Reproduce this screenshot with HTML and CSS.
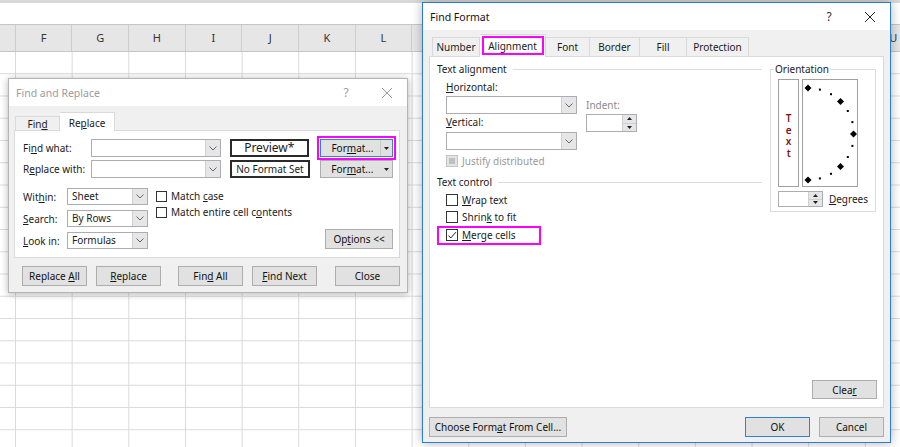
FILE: index.html
```html
<!DOCTYPE html>
<html lang="en">
  <head>
    <meta charset="UTF-8" />
    <meta name="viewport" content="width=device-width, initial-scale=1.0" />
    <title>Find Format</title>
    <link rel="stylesheet" href="styles.css">
  </head>
  <body>
    <!-- worksheet behind the dialogs (M..T sit under the Find Format window) -->
    <div class="sheet">
      <div class="sheet-top"></div>
      <div class="col-heads">
        <div class="col-head"></div>
        <div class="col-head">F</div>
        <div class="col-head">G</div>
        <div class="col-head">H</div>
        <div class="col-head">I</div>
        <div class="col-head">J</div>
        <div class="col-head">K</div>
        <div class="col-head">L</div>
        <div class="col-head"></div>
        <div class="col-head"></div>
        <div class="col-head"></div>
        <div class="col-head"></div>
        <div class="col-head"></div>
        <div class="col-head"></div>
        <div class="col-head"></div>
        <div class="col-head"></div>
        <div class="col-head">U</div>
      </div>
      <div class="cells"></div>
    </div>

    <!-- Find and Replace (inactive window) -->
    <div class="dialog find-replace">
      <div class="title-bar">
        <span class="title">Find and Replace</span>
        <span class="help">?</span>
        <svg class="close" width="10" height="10" viewBox="0 0 10 10"><path d="M0 0L10 10M10 0L0 10" stroke="#9a9a9a" stroke-width="1"/></svg>
      </div>
      <div class="dialog-body">
        <div class="tabs fr-tabs">
          <div class="tab tab-find"><span>Fin<u>d</u></span></div>
          <div class="tab tab-replace active"><span>Re<u>p</u>lace</span></div>
        </div>
        <div class="panel fr-panel">
          <div class="fr-row">
            <span class="fr-label">Fi<u>n</u>d what:</span>
            <div class="combo fr-input">
              <span class="field"></span>
              <span class="drop"><svg width="8" height="5" viewBox="0 0 8 5"><path d="M0.5 0.5L4 4L7.5 0.5" fill="none" stroke="#666"/></svg></span>
            </div>
            <div class="preview preview-big">Preview*</div>
            <button class="btn split default marked">
              <span class="split-text">For<u>m</u>at...</span>
              <span class="split-arrow"><svg width="5" height="3" viewBox="0 0 5 3"><path d="M0 0H5L2.5 3Z" fill="#222"/></svg></span>
            </button>
          </div>
          <div class="fr-row fr-row-2">
            <span class="fr-label">R<u>e</u>place with:</span>
            <div class="combo fr-input">
              <span class="field"></span>
              <span class="drop"><svg width="8" height="5" viewBox="0 0 8 5"><path d="M0.5 0.5L4 4L7.5 0.5" fill="none" stroke="#666"/></svg></span>
            </div>
            <div class="preview">No Format Set</div>
            <button class="btn split">
              <span class="split-text">For<u>m</u>at...</span>
              <span class="split-arrow plain"><svg width="5" height="3" viewBox="0 0 5 3"><path d="M0 0H5L2.5 3Z" fill="#222"/></svg></span>
            </button>
          </div>
          <div class="fr-options">
            <div class="fr-selects">
              <div class="select-row">
                <span class="select-label">Wit<u>h</u>in:</span>
                <div class="combo small-combo">
                  <span class="field">Sheet</span>
                  <span class="drop"><svg width="8" height="5" viewBox="0 0 8 5"><path d="M0.5 0.5L4 4L7.5 0.5" fill="none" stroke="#666"/></svg></span>
                </div>
              </div>
              <div class="select-row">
                <span class="select-label"><u>S</u>earch:</span>
                <div class="combo small-combo">
                  <span class="field">By Rows</span>
                  <span class="drop"><svg width="8" height="5" viewBox="0 0 8 5"><path d="M0.5 0.5L4 4L7.5 0.5" fill="none" stroke="#666"/></svg></span>
                </div>
              </div>
              <div class="select-row">
                <span class="select-label"><u>L</u>ook in:</span>
                <div class="combo small-combo">
                  <span class="field">Formulas</span>
                  <span class="drop"><svg width="8" height="5" viewBox="0 0 8 5"><path d="M0.5 0.5L4 4L7.5 0.5" fill="none" stroke="#666"/></svg></span>
                </div>
              </div>
            </div>
            <div class="fr-checks">
              <div class="check"><span class="box"></span><span>Match <u>c</u>ase</span></div>
              <div class="check"><span class="box"></span><span>Match entire cell c<u>o</u>ntents</span></div>
            </div>
            <button class="btn options-btn"><span>Op<u>t</u>ions &lt;&lt;</span></button>
          </div>
        </div>
        <div class="fr-buttons">
          <button class="btn"><span>Replace <u>A</u>ll</span></button>
          <button class="btn"><span><u>R</u>eplace</span></button>
          <button class="btn btn-find-all"><span>Fin<u>d</u> All</span></button>
          <button class="btn"><span><u>F</u>ind Next</span></button>
          <button class="btn btn-close">Close</button>
        </div>
      </div>
    </div>

    <!-- Find Format (active window) -->
    <div class="dialog find-format">
      <div class="title-bar">
        <span class="title">Find Format</span>
        <span class="help">?</span>
        <svg class="close" width="10" height="10" viewBox="0 0 10 10"><path d="M0 0L10 10M10 0L0 10" stroke="#222" stroke-width="1"/></svg>
      </div>
      <div class="dialog-body">
        <div class="tabs ff-tabs">
          <div class="tab tab-number">Number</div>
          <div class="tab tab-alignment active marked">Alignment</div>
          <div class="tab tab-font">Font</div>
          <div class="tab tab-border">Border</div>
          <div class="tab tab-fill">Fill</div>
          <div class="tab tab-protection">Protection</div>
        </div>
        <div class="panel ff-panel">
          <div class="ff-top">
            <div class="ff-left">
              <div class="group-title">Text alignment</div>
              <div class="align-grid">
                <div class="align-col">
                  <div class="field-label"><u>H</u>orizontal:</div>
                  <div class="combo wide-combo">
                    <span class="field"></span>
                    <span class="drop"><svg width="8" height="5" viewBox="0 0 8 5"><path d="M0.5 0.5L4 4L7.5 0.5" fill="none" stroke="#666"/></svg></span>
                  </div>
                  <div class="field-label"><u>V</u>ertical:</div>
                  <div class="combo wide-combo vertical-combo">
                    <span class="field"></span>
                    <span class="drop"><svg width="8" height="5" viewBox="0 0 8 5"><path d="M0.5 0.5L4 4L7.5 0.5" fill="none" stroke="#666"/></svg></span>
                  </div>
                </div>
                <div class="indent-col">
                  <div class="field-label muted">Indent:</div>
                  <div class="spin indent-spin">
                    <span class="field"></span>
                    <span class="arrows">
                      <span><svg width="5" height="3" viewBox="0 0 5 3"><path d="M0 3H5L2.5 0Z" fill="#222"/></svg></span>
                      <span><svg width="5" height="3" viewBox="0 0 5 3"><path d="M0 0H5L2.5 3Z" fill="#222"/></svg></span>
                    </span>
                  </div>
                </div>
              </div>
              <div class="check disabled justify"><span class="box"></span><span>Justify distributed</span></div>
              <div class="group-title control-title">Text control</div>
              <div class="check control-check"><span class="box"></span><span><u>W</u>rap text</span></div>
              <div class="check control-check"><span class="box"></span><span>Shrin<u>k</u> to fit</span></div>
              <div class="check control-check merge">
                <span class="box"><svg width="11" height="11" viewBox="0 0 11 11"><path d="M1.5 5.5L4.2 8.2L9.8 1.8" fill="none" stroke="#222" stroke-width="1.1"/></svg></span>
                <span><u>M</u>erge cells</span>
              </div>
            </div>
            <fieldset class="orientation">
              <legend>Orientation</legend>
              <div class="orient-boxes">
                <div class="vert-text"><span>Text</span></div>
                <div class="dial">
                  <svg width="54" height="106" viewBox="0 0 54 106">
                    <g fill="#000">
                      <path d="M5 4.5L8.5 8L5 11.5L1.5 8Z"/>
                      <rect x="15.9" y="8.6" width="2" height="2"/>
                      <rect x="27" y="13.2" width="2" height="2"/>
                      <path d="M37.5 18L41 21.5L37.5 25L34 21.5Z"/>
                      <rect x="43.8" y="30" width="2" height="2"/>
                      <rect x="48.4" y="41.1" width="2" height="2"/>
                      <path d="M50.5 50.5L54 54L50.5 57.5L47 54Z"/>
                      <rect x="48.4" y="64.9" width="2" height="2"/>
                      <rect x="43.8" y="76" width="2" height="2"/>
                      <path d="M37.5 83L41 86.5L37.5 90L34 86.5Z"/>
                      <rect x="27" y="92.8" width="2" height="2"/>
                      <rect x="15.9" y="97.4" width="2" height="2"/>
                      <path d="M5 96.5L8.5 100L5 103.5L1.5 100Z"/>
                    </g>
                  </svg>
                </div>
              </div>
              <div class="degrees">
                <div class="spin degrees-spin">
                  <span class="field"></span>
                  <span class="arrows">
                    <span><svg width="5" height="3" viewBox="0 0 5 3"><path d="M0 3H5L2.5 0Z" fill="#222"/></svg></span>
                    <span><svg width="5" height="3" viewBox="0 0 5 3"><path d="M0 0H5L2.5 3Z" fill="#222"/></svg></span>
                  </span>
                </div>
                <span class="degrees-label"><u>D</u>egrees</span>
              </div>
            </fieldset>
          </div>
          <button class="btn clear-btn"><span>Clea<u>r</u></span></button>
        </div>
        <div class="ff-buttons">
          <button class="btn choose-btn"><span>Choose Form<u>a</u>t From Cell...</span></button>
          <button class="btn default ok-btn">OK</button>
          <button class="btn">Cancel</button>
        </div>
      </div>
    </div>
  </body>
</html>
```

FILE: styles.css
```css
* {
  box-sizing: border-box;
}
body {
  margin: 0;
  width: 900px;
  height: 447px;
  overflow: hidden;
  position: relative;
  background: #fff;
  font-family: "Noto Sans", "Open Sans", sans-serif;
  font-size: 10px;
  color: #1b1b1b;
}
u {
  text-underline-offset: 1px;
}

/* worksheet */
.sheet-top {
  height: 25px;
  border-top: 3px solid #d8d8d8;
  border-bottom: 1px solid #c6c6c6;
}
.col-heads {
  display: grid;
  grid-template-columns: 15.7px repeat(16, 56.67px);
  height: 27px;
  background: #e6e6e6;
  border-bottom: 1px solid #c6c6c6;
  overflow: hidden;
}
.col-head {
  border-right: 1px solid #cdcdcd;
  text-align: center;
  line-height: 26px;
  font-size: 11px;
  color: #333;
}
.cells {
  height: 395px;
  background-image:
    linear-gradient(to right, #dadada 1px, transparent 1px),
    linear-gradient(to bottom, #dadada 1px, transparent 1px);
  background-size: 56.67px 22.25px, 56.67px 22.25px;
  background-position: 15px 0, 0 21.25px;
}

/* dialog frame */
.dialog {
  position: absolute;
  display: flex;
  flex-direction: column;
  background: #f0f0f0;
}
.find-replace {
  left: 8px;
  top: 78px;
  width: 400px;
  height: 215px;
  border: 1px solid #b4b4b4;
  box-shadow: 0 1px 7px rgba(0, 0, 0, 0.3);
}
.find-format {
  left: 422px;
  top: 2px;
  width: 469px;
  height: 441px;
  border: 1px solid #2b7dd4;
  box-shadow: 0 0 10px rgba(0, 0, 0, 0.3);
}
.title-bar {
  display: flex;
  align-items: center;
  height: 27px;
  flex-shrink: 0;
  background: #fff;
  padding: 0 15px 0 7px;
}
.title {
  flex: 1;
  font-size: 10.5px;
  color: #111;
}
.help {
  width: 16px;
  text-align: center;
  font-size: 12px;
  color: #333;
  margin-right: 28px;
}
.find-replace .title,
.find-replace .help {
  color: #9c9c9c;
}
.dialog-body {
  flex: 1;
  display: flex;
  flex-direction: column;
}
.find-replace .dialog-body {
  padding: 0 7px 0 5px;
}
.find-format .dialog-body {
  padding: 0 6px;
}

/* tabs */
.tabs {
  display: flex;
  align-items: flex-end;
  position: relative;
  z-index: 1;
}
.tab {
  display: flex;
  align-items: center;
  justify-content: center;
  border: 1px solid #d9d9d9;
  border-bottom: none;
  background: #f0f0f0;
  white-space: nowrap;
}
.tab + .tab {
  border-left: none;
}
.tab.active {
  background: #fff;
  margin-bottom: -1px;
}
.tab.marked {
  outline: 2px solid #ff00ff;
  outline-offset: -4px;
}
.fr-tabs {
  height: 24px;
  margin-left: 1px;
}
.fr-tabs .tab {
  height: 14px;
  padding-top: 1px;
}
.fr-tabs .tab.active {
  height: 19px;
}
.tab-find {
  width: 45px;
}
.tab-replace {
  width: 55px;
}
.ff-tabs {
  height: 26px;
  margin-left: 3px;
}
.ff-tabs .tab {
  height: 19px;
}
.ff-tabs .tab.active {
  height: 23px;
}
.tab-number {
  width: 48px;
}
.tab-alignment {
  width: 66px;
}
.tab-font {
  width: 44px;
}
.tab-border {
  width: 50px;
}
.tab-fill {
  width: 47px;
}
.tab-protection {
  width: 62px;
}

.panel {
  background: #fff;
  border: 1px solid #d9d9d9;
}

/* buttons and fields */
.btn {
  display: flex;
  align-items: center;
  justify-content: center;
  padding: 0;
  height: 20px;
  font: inherit;
  color: #111;
  background: #e1e1e1;
  border: 1px solid #adadad;
  white-space: nowrap;
}
.btn.default {
  border-color: #2c83d9;
}
.btn.marked {
  outline: 2px solid #ff00ff;
  outline-offset: 1px;
}
.combo,
.spin {
  display: flex;
  background: #fff;
  border: 1px solid #abadb3;
}
.combo .field,
.spin .field {
  flex: 1;
  padding-left: 3px;
  line-height: 15px;
}
.drop {
  width: 15px;
  display: flex;
  align-items: center;
  justify-content: center;
  background: #e6e6e6;
  border-left: 1px solid #cfcfcf;
}
.arrows {
  width: 14px;
  display: flex;
  flex-direction: column;
  border-left: 1px solid #cfcfcf;
}
.arrows span {
  flex: 1;
  display: flex;
  align-items: center;
  justify-content: center;
  background: #e6e6e6;
}
.arrows span + span {
  border-top: 1px solid #cfcfcf;
}
.check {
  display: flex;
  align-items: center;
  line-height: 14px;
  white-space: nowrap;
}
.check .box {
  width: 12px;
  height: 12px;
  margin-right: 4px;
  border: 1px solid #333;
  background: #fff;
  display: flex;
  align-items: center;
  justify-content: center;
}

/* Find and Replace panel */
.fr-panel {
  height: 128px;
  padding: 8px 6px 0 8px;
}
.fr-row {
  display: flex;
  align-items: center;
  height: 18px;
}
.fr-row-2 {
  margin-top: 3px;
}
.fr-label {
  width: 69px;
}
.fr-input {
  width: 131px;
  height: 18px;
}
.preview {
  width: 80px;
  height: 18px;
  margin-left: 9px;
  border: 2px solid #2a2a2a;
  text-align: center;
  line-height: 14px;
}
.preview-big {
  font-size: 12px;
}
.split {
  width: 74px;
  height: 18px;
  margin-left: 11px;
}
.fr-row-2 .split {
  margin-left: 10px;
}
.split-text {
  flex: 1;
  text-align: center;
  padding-left: 4px;
}
.split-arrow {
  width: 12px;
  height: 100%;
  display: flex;
  align-items: center;
  justify-content: center;
  border-left: 1px solid #c8c8c8;
}
.split-arrow.plain {
  border-left-color: transparent;
}
.fr-options {
  display: flex;
  margin-top: 10px;
}
.fr-selects {
  width: 125px;
}
.select-row {
  display: flex;
  align-items: center;
}
.select-row + .select-row {
  margin-top: 5px;
}
.select-label {
  width: 44px;
}
.small-combo {
  width: 81px;
  height: 17px;
}
.small-combo .field {
  padding-left: 4px;
}
.fr-checks {
  flex: 1;
  margin-left: 8px;
}
.fr-checks .check {
  line-height: 16px;
}
.fr-checks .box {
  width: 11px;
  height: 11px;
  margin-right: 4px;
}
.options-btn {
  align-self: flex-end;
  width: 68px;
}
.fr-buttons {
  display: flex;
  gap: 9px;
  margin: 8px 0 0 8px;
}
.fr-buttons .btn {
  width: 66px;
}
.fr-buttons .btn-find-all {
  margin-left: 8px;
}
.fr-buttons .btn-close {
  margin-left: 9px;
}

/* Find Format panel */
.ff-panel {
  height: 352px;
  padding: 5px 6px 8px 7px;
  display: flex;
  flex-direction: column;
}
.ff-top {
  display: flex;
  align-items: flex-start;
}
.ff-left {
  width: 325px;
}
.group-title {
  display: flex;
  align-items: center;
  line-height: 14px;
}
.group-title::after {
  content: "";
  flex: 1;
  margin-left: 6px;
  border-top: 1px solid #dcdcdc;
}
.align-grid {
  display: flex;
  margin-top: 4px;
  padding-left: 9px;
}
.align-col {
  width: 131px;
}
.field-label {
  line-height: 15px;
}
.field-label.muted {
  color: #8a8a8a;
}
.wide-combo {
  height: 18px;
  margin-top: 1px;
  margin-bottom: 1px;
}
.vertical-combo {
  margin-top: 2px;
}
.indent-col {
  margin-left: 9px;
  padding-top: 18px;
}
.indent-spin {
  width: 51px;
  height: 18px;
  margin-top: 1px;
}
.ff-left .check {
  margin-left: 9px;
}
.justify {
  margin-top: 3px;
  color: #9a9a9a;
}
.check.disabled .box {
  border-color: #c4c4c4;
  background: #bfbfbf;
  box-shadow: inset 0 0 0 2px #e4e4e4;
}
.control-title {
  margin-top: 7px;
}
.control-check {
  margin-top: 3px;
}
.control-title + .control-check {
  margin-top: 4px;
}
.ff-left .check.merge {
  width: 104px;
  margin: 2px 0 0 0;
  padding: 0 0 1px 7px;
  border: 2px solid #ff00ff;
}

.orientation {
  width: 106px;
  margin: 0 0 0 8px;
  padding: 3px 7px 4px 7px;
  border: 1px solid #dcdcdc;
  min-width: 0;
}
.orientation legend {
  margin-left: -4px;
  padding: 0 1px;
  line-height: 14px;
}
.orient-boxes {
  display: flex;
  gap: 3px;
}
.vert-text {
  width: 21px;
  height: 108px;
  border: 1px solid #a0a0a0;
  display: flex;
  justify-content: center;
  padding-top: 31px;
  color: #7a1414;
  font-weight: 600;
}
.vert-text span {
  writing-mode: vertical-rl;
  text-orientation: upright;
  letter-spacing: -2.4px;
  line-height: 12px;
}
.dial {
  width: 56px;
  height: 108px;
  border: 1px solid #a0a0a0;
}
.dial svg {
  display: block;
}
.degrees {
  display: flex;
  align-items: center;
  margin-top: 4px;
}
.degrees-spin {
  width: 49px;
  height: 16px;
}
.degrees-label {
  margin-left: 6px;
}
.clear-btn {
  margin-top: auto;
  align-self: flex-end;
  width: 65px;
  height: 19px;
}
.ff-buttons {
  display: flex;
  gap: 9px;
  margin-top: 9px;
}
.ff-buttons .btn {
  width: 65px;
}
.ff-buttons .choose-btn {
  width: 138px;
}
.ff-buttons .ok-btn {
  margin-left: auto;
}
```
